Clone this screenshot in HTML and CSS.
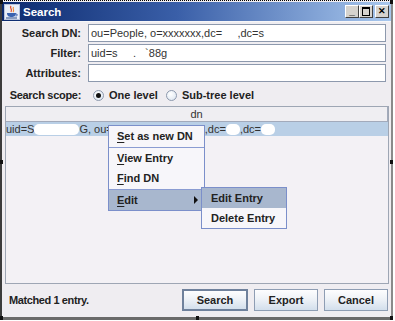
FILE: index.html
```html
<!DOCTYPE html>
<html lang="en">
<head>
  <meta charset="UTF-8" />
  <title>Search</title>
  <link rel="stylesheet" href="styles.css">
</head>
<body>

<div class="window">
  <div class="titlebar">
    <svg class="app-icon" width="16" height="16" viewBox="0 0 16 16">
      <rect x="0.5" y="0.5" width="15" height="15" fill="#e9eef7" stroke="#b8c4dc"/>
      <path d="M7 2 C5 4 9 5 7 8" stroke="#e0502a" stroke-width="1.3" fill="none"/>
      <path d="M9.5 3 C8 5 11 6 9 8" stroke="#f08a30" stroke-width="1.1" fill="none"/>
      <path d="M3 9 H12 C12 12 10 13 7.5 13 C5 13 3 12 3 9 Z" fill="#3a63b0"/>
      <path d="M12 10 C14 10 14 12 11.5 12" stroke="#3a63b0" fill="none"/>
      <rect x="2" y="13.5" width="11" height="1" fill="#2b4c8c"/>
    </svg>
    <span class="title">Search</span>
    <div class="wbtns">
      <span class="wbtn">_</span>
      <span class="wbtn"><i class="max"></i></span>
      <span class="wbtn close">&#x2715;</span>
    </div>
  </div>

  <div class="content">
    <div class="form">
      <label class="lbl">Search DN:</label>
      <div class="field">ou=People, o=xxxxxxx,dc=&nbsp;&nbsp;&nbsp;&nbsp;&nbsp;,dc=s</div>
      <label class="lbl">Filter:</label>
      <div class="field">uid=s&nbsp;&nbsp;&nbsp;&nbsp;&nbsp;.&nbsp;&nbsp;&nbsp;`88g</div>
      <label class="lbl">Attributes:</label>
      <div class="field"></div>
    </div>

    <div class="scope">
      <span class="lbl scope-lbl">Search scope:</span>
      <span class="radio on"></span><span class="opt">One level</span>
      <span class="radio"></span><span class="opt">Sub-tree level</span>
    </div>

    <div class="table">
      <div class="thead">dn</div>
      <div class="trow selected">uid=S<span class="blot w45"></span>G, ou=<span class="hidden-part"></span>,dc=<span class="blot w14"></span>,dc=<span class="blot w14"></span></div>
    </div>

    <div class="footer">
      <span class="status">Matched 1 entry.</span>
      <div class="buttons">
        <button class="btn focus">Search</button>
        <button class="btn">Export</button>
        <button class="btn">Cancel</button>
      </div>
    </div>
  </div>

  <div class="popup">
    <div class="item"><u>S</u>et as new DN</div>
    <div class="sep"></div>
    <div class="item"><u>V</u>iew Entry</div>
    <div class="item"><u>F</u>ind DN</div>
    <div class="sep"></div>
    <div class="item armed"><u>E</u>dit<span class="arrow"></span></div>
  </div>

  <div class="popup submenu">
    <div class="item armed">Edit Entry</div>
    <div class="item">Delete Entry</div>
  </div>

  <span class="handle h-tl"></span>
  <span class="handle h-tr"></span>
  <span class="handle h-ml"></span>
  <span class="handle h-mr"></span>
  <span class="handle h-bl"></span>
  <span class="handle h-bm"></span>
  <span class="handle h-br"></span>
</div>

</body>
</html>
```

FILE: styles.css
```css
body {
  margin: 0;
  background: #ffffff;
  font-family: "Liberation Sans", Arial, sans-serif;
}
.window {
  position: relative;
  width: 393px;
  height: 320px;
  box-sizing: border-box;
  border-top: 1px dotted #000;
  border-left: 2px solid #3c3c3c;
  border-right: 2px solid #8a8a8a;
  border-bottom: 3px solid #6a6a6a;
  background: #efedf1;
  display: flex;
  flex-direction: column;
}
.titlebar {
  height: 19px;
  margin-top: 1px;
  background: linear-gradient(90deg, #0c2a6e, #3a5fa8 45%, #a9c8ee);
  display: flex;
  align-items: center;
  padding-left: 2px;
  border-bottom: 1px solid #f6f6f8;
}
.app-icon {
  flex: none;
}
.title {
  color: #fff;
  font-weight: bold;
  font-size: 11.5px;
  margin-left: 3px;
}
.wbtns {
  margin-left: auto;
  margin-right: 2px;
  display: flex;
}
.wbtn {
  width: 12px;
  height: 11px;
  background: #d6d3ce;
  border: 1px solid;
  border-color: #ffffff #404040 #404040 #ffffff;
  font-size: 10px;
  font-weight: bold;
  line-height: 10px;
  text-align: center;
  color: #000;
  position: relative;
}
.wbtn.close {
  margin-left: 2px;
  font-size: 9px;
  line-height: 11px;
}
.max {
  position: absolute;
  left: 2px;
  top: 1px;
  width: 6px;
  height: 6px;
  border: 1px solid #000;
  border-top-width: 2px;
}
.content {
  flex: 1;
  display: flex;
  flex-direction: column;
  padding: 2px 0 0 3px;
}
.form {
  display: grid;
  grid-template-columns: 74px 298px;
  column-gap: 7px;
  row-gap: 2px;
  padding-left: 2px;
}
.lbl {
  font-size: 11px;
  font-weight: bold;
  color: #222;
  text-align: right;
  line-height: 18px;
  white-space: nowrap;
}
.field {
  height: 16px;
  background: #fff;
  border: 1px solid #8d99ad;
  font-size: 11px;
  line-height: 16px;
  padding-left: 2px;
  color: #333;
  white-space: pre;
}
.scope {
  display: flex;
  align-items: center;
  height: 20px;
  margin-top: 3px;
  padding-left: 2px;
}
.scope-lbl {
  width: 74px;
  letter-spacing: -0.3px;
}
.radio {
  width: 9px;
  height: 9px;
  border: 1px solid #8d99ad;
  border-radius: 50%;
  background: radial-gradient(circle at 40% 35%, #ffffff, #d8e2ee);
  margin-left: 12px;
  position: relative;
}
.radio.on::after {
  content: "";
  position: absolute;
  left: 2px;
  top: 2px;
  width: 5px;
  height: 5px;
  border-radius: 50%;
  background: #111;
}
.radio + .opt {
  margin-left: 5px;
}
.opt {
  font-size: 11px;
  font-weight: bold;
  color: #222;
}
.opt + .radio {
  margin-left: 8px;
}
.table {
  margin-top: 1px;
  width: 384px;
  height: 178px;
  box-sizing: border-box;
  border: 1px solid #9ea6b4;
  background: #f3f1f5;
}
.thead {
  height: 14px;
  line-height: 14px;
  text-align: center;
  font-size: 11px;
  color: #333;
  background: #efeef2;
  border-bottom: 1px solid #a2aabb;
  border-right: 1px solid #a2aabb;
}
.trow {
  height: 14px;
  line-height: 14px;
  font-size: 11px;
  color: #333;
  white-space: nowrap;
  display: flex;
  align-items: center;
}
.selected {
  background: #b9cfe6;
}
.blot {
  display: inline-block;
  height: 11px;
  background: #fff;
  border-radius: 5px;
}
.w45 {
  width: 45px;
}
.w14 {
  width: 14px;
}
.hidden-part {
  display: inline-block;
  width: 92px;
}
.footer {
  flex: 1;
  display: flex;
  align-items: center;
  justify-content: space-between;
  padding: 0 3px 2px 4px;
}
.status {
  font-size: 11px;
  font-weight: bold;
  color: #222;
  letter-spacing: -0.4px;
}
.buttons {
  display: flex;
  gap: 6px;
}
.btn {
  height: 22px;
  width: 64px;
  font-family: "Liberation Sans", Arial, sans-serif;
  font-size: 11px;
  font-weight: bold;
  color: #222;
  border: 1px solid #8e9db3;
  background: linear-gradient(#fdfdfe, #eef2f7 45%, #d3dfec);
  padding: 0;
}
.btn.focus {
  width: 66px;
  border: 2px solid #6f819c;
}
.popup {
  position: absolute;
  left: 106px;
  top: 124px;
  width: 95px;
  background: #f7f6fa;
  border: 1px solid #7b8fca;
}
.item {
  position: relative;
  height: 20px;
  line-height: 20px;
  padding-left: 8px;
  font-size: 11px;
  font-weight: bold;
  color: #222;
}
.item u {
  text-decoration-thickness: 1px;
  text-underline-offset: 2px;
}
.armed {
  background: #a8b7ce;
}
.sep {
  height: 1px;
  margin-top: 1px;
  background: #8a9cd2;
}
.arrow {
  position: absolute;
  right: 6px;
  top: 6px;
  width: 0;
  height: 0;
  border-top: 4px solid transparent;
  border-bottom: 4px solid transparent;
  border-left: 4px solid #111;
}
.submenu {
  left: 199px;
  top: 186px;
  width: 84px;
}
.submenu .item {
  padding-left: 9px;
}
.handle {
  position: absolute;
  width: 3px;
  height: 4px;
  background: #111;
}
.h-tl { left: -2px; top: -1px; }
.h-tr { right: -2px; top: -1px; }
.h-ml { left: -2px; top: 159px; }
.h-mr { right: -2px; top: 159px; }
.h-bl { left: -2px; bottom: -3px; }
.h-bm { left: 194px; bottom: -3px; }
.h-br { right: -2px; bottom: -3px; }
```
